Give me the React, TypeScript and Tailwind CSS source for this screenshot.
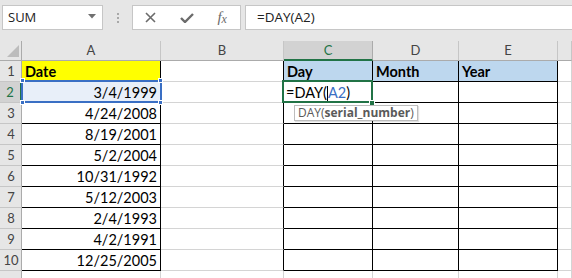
import React from 'react';

const dates = ['3/4/1999', '4/24/2008', '8/19/2001', '5/2/2004', '10/31/1992', '5/12/2003', '2/4/1993', '4/2/1991', '12/25/2005'];
const colLabels = ['A', 'B', 'C', 'D', 'E', ''];

function bordered(r: number, c: number) {
  return r >= 1 && r <= 10 && (c === 0 || (c >= 2 && c <= 4));
}

function cellContent(r: number, c: number): React.ReactNode {
  if (r === 1 && c === 0) return <span className="font-bold pl-[3px]">Date</span>;
  if (r === 1 && c === 2) return <span className="font-bold pl-[3px]">Day</span>;
  if (r === 1 && c === 3) return <span className="font-bold pl-[3px]">Month</span>;
  if (r === 1 && c === 4) return <span className="font-bold pl-[3px]">Year</span>;
  if (r >= 2 && r <= 10 && c === 0) return <span className="ml-auto pr-[3px]">{dates[r - 2]}</span>;
  if (r === 2 && c === 2)
    return (
      <span className="pl-[2px] flex items-end">
        <span>=DAY(</span>
        <span className="inline-block w-px h-[15px] bg-black mb-[1px]" />
        <span className="text-[#3a6fc4]">A2</span>
        <span>)</span>
      </span>
    );
  return null;
}

function cellBg(r: number, c: number) {
  if (r === 1 && c === 0) return 'bg-[#ffff00]';
  if (r === 1 && c >= 2 && c <= 4) return 'bg-[#bdd7ee]';
  if (r === 2 && c === 0) return 'bg-[#e8eff9]';
  return 'bg-white';
}

export default function App() {
  const rows = Array.from({ length: 11 }, (_, i) => i + 1);
  return (
    <div className="w-[572px] h-[278px] overflow-hidden bg-white relative" style={{ fontFamily: 'Lato, sans-serif' }}>
      {/* Top formula bar */}
      <div className="h-[41px] bg-[#e6e6e6] flex items-start pt-[5px]" style={{ fontFamily: '"Open Sans", sans-serif' }}>
        <div className="ml-[2px] w-[101px] h-[25px] bg-white border border-[#c6c6c6] flex items-center justify-between pl-[5px] pr-[5px]">
          <span className="text-[13px] text-[#222] leading-none">SUM</span>
          <svg width="8" height="5" viewBox="0 0 8 5" className="mr-[1px] -mt-[2px]">
            <polygon points="0,0 8,0 4,4.5" fill="#707070" />
          </svg>
        </div>
        <div className="ml-[14px] h-[25px] flex flex-col justify-center gap-[2px]">
          <div className="w-[2px] h-[2px] bg-[#a8a8a8]" />
          <div className="w-[2px] h-[2px] bg-[#a8a8a8]" />
          <div className="w-[2px] h-[2px] bg-[#a8a8a8]" />
        </div>
        <div className="ml-[13px] w-[109px] h-[25px] bg-white border border-[#c6c6c6] flex items-center">
          <div className="w-[36px] flex justify-center">
            <svg width="11" height="11" viewBox="0 0 11 11">
              <path d="M1 1 L10 10 M10 1 L1 10" stroke="#6b6b6b" strokeWidth="1.6" fill="none" />
            </svg>
          </div>
          <div className="w-[36px] flex justify-center">
            <svg width="14" height="10" viewBox="0 0 14 10">
              <path d="M1 5 L5 9 L13 1" stroke="#6b6b6b" strokeWidth="2.4" fill="none" />
            </svg>
          </div>
          <div className="w-[36px] flex justify-center text-[#6b6b6b] italic leading-none" style={{ fontFamily: '"Liberation Serif", serif' }}>
            <span className="text-[15px]">f</span>
            <span className="text-[12px] mt-[3px]">x</span>
          </div>
        </div>
        <div className="ml-[4px] flex-1 h-[25px] bg-white border border-r-0 border-[#c6c6c6] flex items-center pl-[11px]">
          <span className="text-[13.5px] text-[#222] leading-none">=DAY(A2)</span>
        </div>
      </div>

      {/* Grid */}
      <div className="relative">
        <div className="grid grid-cols-[22px_139px_123px_89px_86px_99px_1fr]">
          {/* header row */}
          <div className="h-[20px] bg-[#e6e6e6] border-r border-b border-r-[#ababab] border-b-[#ababab] relative">
            <svg width="22" height="20" viewBox="0 0 22 20" className="absolute left-0 top-0">
              <polygon points="19,4 19,16 7,16" fill="#bcbcbc" />
            </svg>
          </div>
          {colLabels.map((l, c) =>
            c === 2 ? (
              <div key={c} className="h-[20px] bg-[#d2d2d2] border-r border-r-[#ababab] border-b-2 border-b-[#217346] flex items-center justify-center text-[13px] text-[#217346] leading-none">
                {l}
              </div>
            ) : (
              <div key={c} className="h-[20px] bg-[#e6e6e6] border-r border-b border-r-[#c6c6c6] border-b-[#ababab] flex items-center justify-center text-[13px] text-[#444] leading-none">
                {l}
              </div>
            )
          )}
          {rows.map((r) => (
            <React.Fragment key={r}>
              {r === 2 ? (
                <div className="h-[21px] bg-[#d2d2d2] border-r-2 border-b border-r-[#217346] border-b-[#c6c6c6] flex items-center justify-center text-[13px] text-[#217346] leading-none">
                  {r}
                </div>
              ) : (
                <div className="h-[21px] bg-[#e6e6e6] border-r border-b border-r-[#ababab] border-b-[#c6c6c6] flex items-center justify-center text-[13px] text-[#444] leading-none pl-[1px]">
                  {r <= 10 ? r : ''}
                </div>
              )}
              {colLabels.map((_, c) => {
                const rb = bordered(r, c) || bordered(r, c + 1);
                const bb = bordered(r, c) || bordered(r + 1, c);
                return (
                  <div
                    key={c}
                    className={`h-[21px] border-r border-b flex items-end text-[14.5px] leading-[18px] text-black whitespace-nowrap overflow-visible ${rb ? 'border-r-black' : 'border-r-[#d4d4d4]'} ${bb ? 'border-b-black' : 'border-b-[#d4d4d4]'} ${cellBg(r, c)}`}
                  >
                    {cellContent(r, c)}
                  </div>
                );
              })}
            </React.Fragment>
          ))}
        </div>

        {/* A2 reference highlight */}
        <div className="absolute left-[21px] top-[39px] w-[141px] h-[23px] border-2 border-[#3a6fc4] pointer-events-none" />
        <div className="absolute left-[20px] top-[37px] w-[5px] h-[5px] bg-[#3a6fc4] border border-white" />
        <div className="absolute left-[158px] top-[37px] w-[5px] h-[5px] bg-[#3a6fc4] border border-white" />
        <div className="absolute left-[20px] top-[59px] w-[5px] h-[5px] bg-[#3a6fc4] border border-white" />
        <div className="absolute left-[158px] top-[59px] w-[5px] h-[5px] bg-[#3a6fc4] border border-white" />

        {/* C2 active cell */}
        <div className="absolute left-[282px] top-[39px] w-[91px] h-[23px] border-2 border-[#217346] pointer-events-none" />
        <div className="absolute left-[369px] top-[59px] w-[6px] h-[6px] bg-[#217346] border border-white" />

        {/* Tooltip */}
        <div
          className="absolute left-[294px] top-[64px] h-[16px] px-[3px] bg-white border border-[#bdbdbd] flex items-center text-[12px] text-[#5a5a5a] leading-none whitespace-nowrap shadow-[1px_1px_1px_rgba(0,0,0,0.12)]"
          style={{ fontFamily: '"Open Sans", sans-serif' }}
        >
          <span>DAY(</span>
          <span className="font-bold">serial_number</span>
          <span>)</span>
        </div>
      </div>
    </div>
  );
}
